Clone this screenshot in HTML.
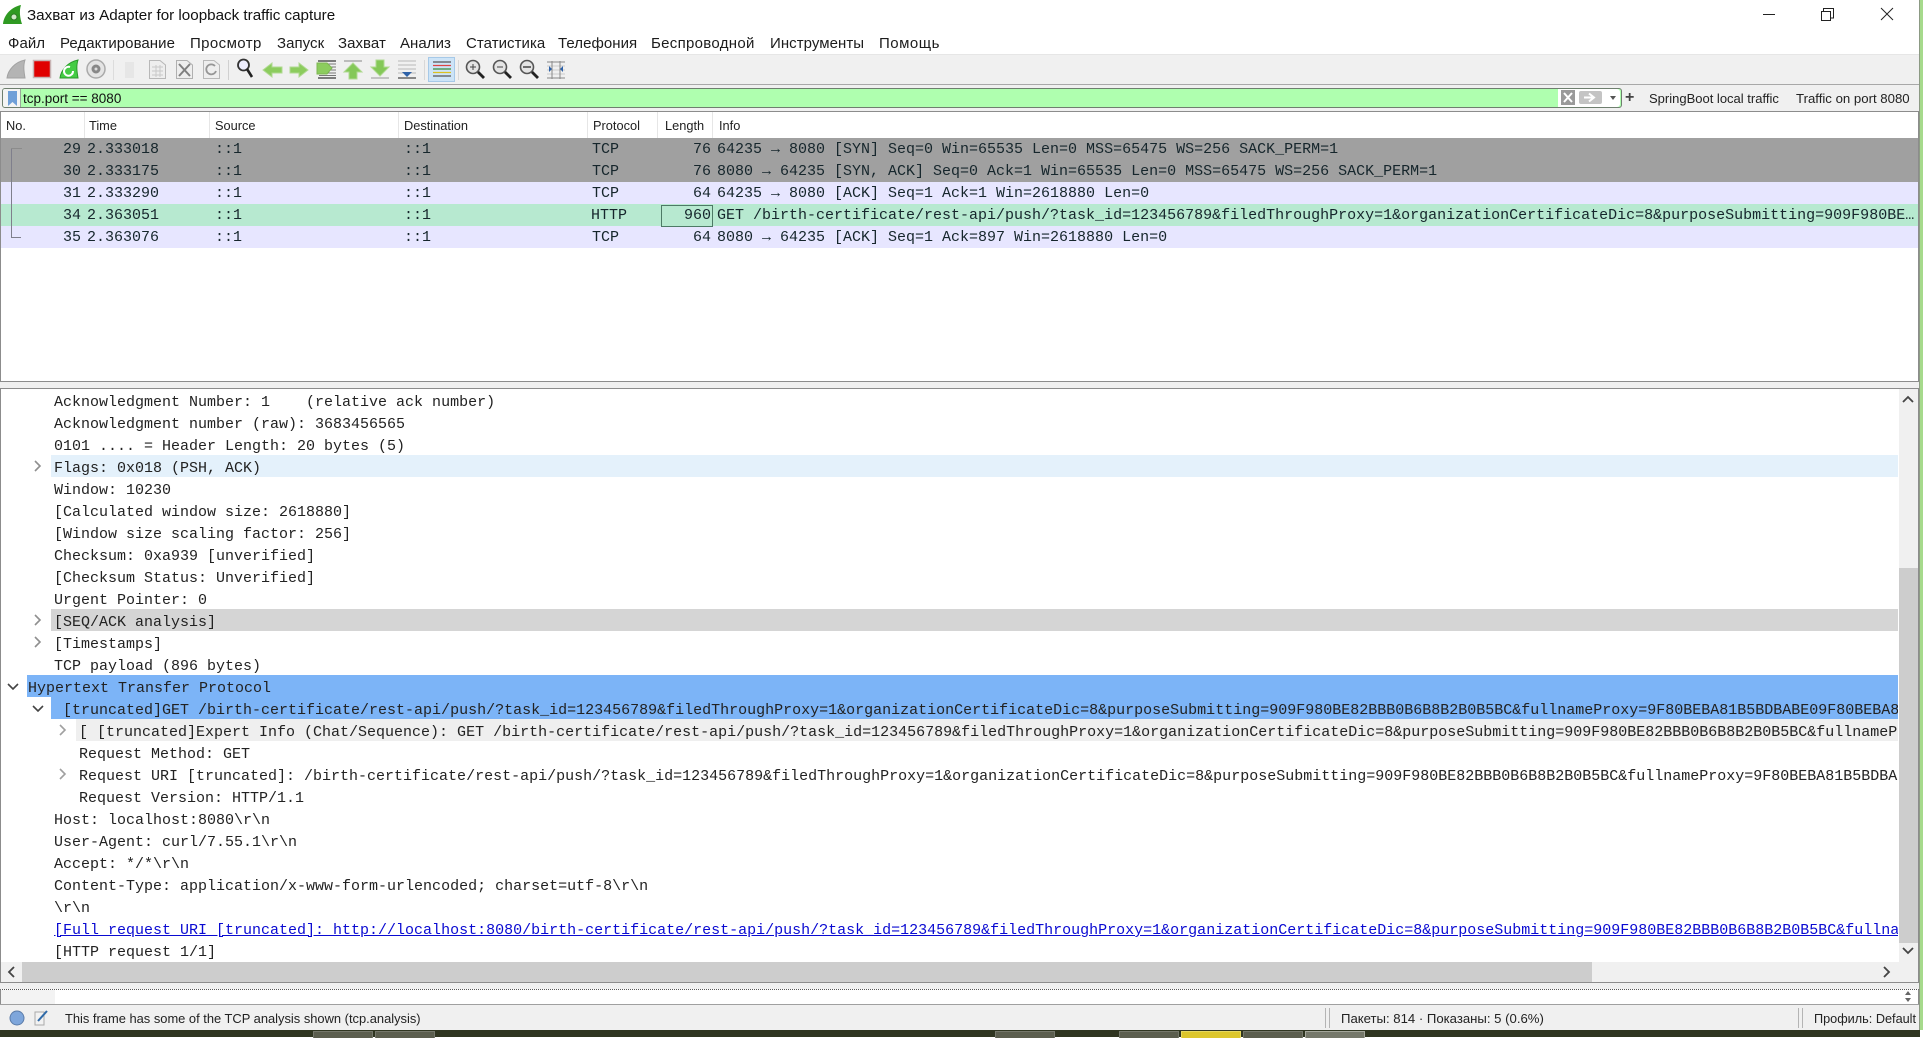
<!DOCTYPE html>
<html><head><meta charset="utf-8"><title>Wireshark</title>
<style>
html,body{margin:0;padding:0;background:#fff;}
body{width:1923px;height:1037px;overflow:hidden;position:relative;font-family:"Liberation Sans","Noto Sans CJK SC",sans-serif;color:#1a1a1a;}
.b{position:absolute;}
.t{position:absolute;white-space:pre;}
.menu{font-size:15px;letter-spacing:.05px;line-height:20px;top:33.5px;color:#1c1c1c;}
.th{font-size:12.8px;line-height:20px;top:116px;color:#222;}
.m{font-family:"Liberation Mono",monospace;font-size:15px;letter-spacing:0;line-height:22px;color:#16262c;margin-top:1px;}
.d{position:absolute;white-space:pre;font-family:"Liberation Mono",monospace;font-size:15px;letter-spacing:0;line-height:22px;color:#222;margin-top:3px;}
#det{position:absolute;left:0;top:389px;width:1898px;height:573px;overflow:hidden;}
.hl{position:absolute;height:22px;right:0;}
</style></head>
<body>
<!-- top menu and toolbar backgrounds -->
<div class="b" style="left:0;top:54px;width:1919px;height:1px;background:#e6e6e6"></div>
<div class="b" style="left:0;top:55px;width:1919px;height:29px;background:#f0f0f0"></div>
<div class="b" style="left:0;top:84px;width:1919px;height:1px;background:#a8a8a8"></div>
<div class="b" style="left:0;top:85px;width:1919px;height:26px;background:#f0f0f0"></div>

<div class="t" style="left:27px;top:6px;font-size:15.2px;line-height:20px;color:#111">Захват из Adapter for loopback traffic capture</div>
<div class="t menu" style="left:8px">Файл</div>
<div class="t menu" style="left:60px">Редактирование</div>
<div class="t menu" style="left:190px;letter-spacing:.4px">Просмотр</div>
<div class="t menu" style="left:277px">Запуск</div>
<div class="t menu" style="left:338px">Захват</div>
<div class="t menu" style="left:400px">Анализ</div>
<div class="t menu" style="left:466px">Статистика</div>
<div class="t menu" style="left:558px">Телефония</div>
<div class="t menu" style="left:651px;letter-spacing:.3px">Беспроводной</div>
<div class="t menu" style="left:770px">Инструменты</div>
<div class="t menu" style="left:879px;letter-spacing:.5px">Помощь</div>

<!-- filter bar -->
<div class="b" style="left:2px;top:88px;width:1618px;height:18px;border:1px solid #6f7f6f;border-radius:3px;background:#afffaf"></div>
<div class="b" style="left:3px;top:89px;width:17px;height:18px;background:#f4f4f4;border-right:1px solid #9aa89a;border-radius:2px 0 0 2px"></div>
<div class="b" style="left:1558px;top:89px;width:62px;height:18px;background:#fff;border-radius:0 3px 3px 0"></div>
<div class="t" style="left:23px;top:89px;font-size:13.5px;line-height:20px;color:#111">tcp.port == 8080</div>
<div class="t" style="left:1625px;top:88px;font-size:16px;line-height:20px;font-weight:bold;color:#444">+</div>
<div class="t" style="left:1649px;top:89px;font-size:13px;line-height:20px;color:#222">SpringBoot local traffic</div>
<div class="t" style="left:1796px;top:89px;font-size:13.2px;line-height:20px;color:#222">Traffic on port 8080</div>

<!-- packet list -->
<div class="b" style="left:0;top:111px;width:1917px;height:269px;border:1px solid #8c8c8c;background:#fff"></div>
<div class="b" style="left:84px;top:112px;width:1px;height:26px;background:#e6e6e6"></div>
<div class="b" style="left:209px;top:112px;width:1px;height:26px;background:#e6e6e6"></div>
<div class="b" style="left:398px;top:112px;width:1px;height:26px;background:#e6e6e6"></div>
<div class="b" style="left:587px;top:112px;width:1px;height:26px;background:#e6e6e6"></div>
<div class="b" style="left:657px;top:112px;width:1px;height:26px;background:#e6e6e6"></div>
<div class="b" style="left:712px;top:112px;width:1px;height:26px;background:#e6e6e6"></div>
<div class="t th" style="left:6px">No.</div>
<div class="t th" style="left:89px">Time</div>
<div class="t th" style="left:215px">Source</div>
<div class="t th" style="left:404px">Destination</div>
<div class="t th" style="left:593px">Protocol</div>
<div class="t th" style="left:665px">Length</div>
<div class="t th" style="left:719px">Info</div>

<div class="b" style="left:1px;top:138px;width:1917px;height:44px;background:#a0a0a0"></div>
<div class="b" style="left:1px;top:182px;width:1917px;height:22px;background:#e7e6ff"></div>
<div class="b" style="left:1px;top:204px;width:1917px;height:22px;background:#b7e9d0"></div>
<div class="b" style="left:1px;top:226px;width:1917px;height:22px;background:#e7e6ff"></div>
<div class="b" style="left:11px;top:148px;width:1px;height:89px;background:#7f7f8c"></div>
<div class="b" style="left:11px;top:148px;width:11px;height:1px;background:#8c8c8c"></div>
<div class="b" style="left:11px;top:237px;width:10px;height:1px;background:#7f7f8c"></div>
<div class="b" style="left:661px;top:205px;width:50px;height:20px;border:1px solid #4d7a66"></div>

<div class="t m" style="left:63px;top:138px">29</div><div class="t m" style="left:87px;top:138px">2.333018</div><div class="t m" style="left:215px;top:138px">::1</div><div class="t m" style="left:404px;top:138px">::1</div><div class="t m" style="left:592px;top:138px">TCP</div><div class="t m" style="left:693px;top:138px">76</div><div class="t m" style="left:717px;top:138px">64235 → 8080 [SYN] Seq=0 Win=65535 Len=0 MSS=65475 WS=256 SACK_PERM=1</div>
<div class="t m" style="left:63px;top:160px">30</div><div class="t m" style="left:87px;top:160px">2.333175</div><div class="t m" style="left:215px;top:160px">::1</div><div class="t m" style="left:404px;top:160px">::1</div><div class="t m" style="left:592px;top:160px">TCP</div><div class="t m" style="left:693px;top:160px">76</div><div class="t m" style="left:717px;top:160px">8080 → 64235 [SYN, ACK] Seq=0 Ack=1 Win=65535 Len=0 MSS=65475 WS=256 SACK_PERM=1</div>
<div class="t m" style="left:63px;top:182px">31</div><div class="t m" style="left:87px;top:182px">2.333290</div><div class="t m" style="left:215px;top:182px">::1</div><div class="t m" style="left:404px;top:182px">::1</div><div class="t m" style="left:592px;top:182px">TCP</div><div class="t m" style="left:693px;top:182px">64</div><div class="t m" style="left:717px;top:182px">64235 → 8080 [ACK] Seq=1 Ack=1 Win=2618880 Len=0</div>
<div class="t m" style="left:63px;top:204px">34</div><div class="t m" style="left:87px;top:204px">2.363051</div><div class="t m" style="left:215px;top:204px">::1</div><div class="t m" style="left:404px;top:204px">::1</div><div class="t m" style="left:591px;top:204px">HTTP</div><div class="t m" style="left:684px;top:204px">960</div><div class="t m" style="left:717px;top:204px">GET /birth-certificate/rest-api/push/?task_id=123456789&amp;filedThroughProxy=1&amp;organizationCertificateDic=8&amp;purposeSubmitting=909F980BE…</div>
<div class="t m" style="left:63px;top:226px">35</div><div class="t m" style="left:87px;top:226px">2.363076</div><div class="t m" style="left:215px;top:226px">::1</div><div class="t m" style="left:404px;top:226px">::1</div><div class="t m" style="left:592px;top:226px">TCP</div><div class="t m" style="left:693px;top:226px">64</div><div class="t m" style="left:717px;top:226px">8080 → 64235 [ACK] Seq=1 Ack=897 Win=2618880 Len=0</div>

<!-- splitter -->
<div class="b" style="left:0;top:382px;width:1919px;height:6px;background:#f0f0f0"></div>
<!-- details pane -->
<div class="b" style="left:0;top:388px;width:1917px;height:593px;border:1px solid #8c8c8c;background:#fff"></div>
<div id="det">
<div class="hl" style="left:51px;top:66px;background:#e4f1fb"></div>
<div class="hl" style="left:51px;top:220px;background:#d5d5d5"></div>
<div class="hl" style="left:27px;top:286px;background:#7cb4f7"></div>
<div class="hl" style="left:51px;top:308px;background:#7cb4f7"></div>
<div class="hl" style="left:76px;top:330px;background:#efefef"></div>
<div class="d" style="left:54px;top:0">Acknowledgment Number: 1    (relative ack number)</div>
<div class="d" style="left:54px;top:22px">Acknowledgment number (raw): 3683456565</div>
<div class="d" style="left:54px;top:44px">0101 .... = Header Length: 20 bytes (5)</div>
<div class="d" style="left:54px;top:66px">Flags: 0x018 (PSH, ACK)</div>
<div class="d" style="left:54px;top:88px">Window: 10230</div>
<div class="d" style="left:54px;top:110px">[Calculated window size: 2618880]</div>
<div class="d" style="left:54px;top:132px">[Window size scaling factor: 256]</div>
<div class="d" style="left:54px;top:154px">Checksum: 0xa939 [unverified]</div>
<div class="d" style="left:54px;top:176px">[Checksum Status: Unverified]</div>
<div class="d" style="left:54px;top:198px">Urgent Pointer: 0</div>
<div class="d" style="left:54px;top:220px">[SEQ/ACK analysis]</div>
<div class="d" style="left:54px;top:242px">[Timestamps]</div>
<div class="d" style="left:54px;top:264px">TCP payload (896 bytes)</div>
<div class="d" style="left:28px;top:286px">Hypertext Transfer Protocol</div>
<div class="d" style="left:63px;top:308px">[truncated]GET /birth-certificate/rest-api/push/?task_id=123456789&amp;filedThroughProxy=1&amp;organizationCertificateDic=8&amp;purposeSubmitting=909F980BE82BBB0B6B8B2B0B5BC&amp;fullnameProxy=9F80BEBA81B5BDBABE09F80BEBA81B5</div>
<div class="d" style="left:79px;top:330px">[ [truncated]Expert Info (Chat/Sequence): GET /birth-certificate/rest-api/push/?task_id=123456789&amp;filedThroughProxy=1&amp;organizationCertificateDic=8&amp;purposeSubmitting=909F980BE82BBB0B6B8B2B0B5BC&amp;fullnameProxy=9F80</div>
<div class="d" style="left:79px;top:352px">Request Method: GET</div>
<div class="d" style="left:79px;top:374px">Request URI [truncated]: /birth-certificate/rest-api/push/?task_id=123456789&amp;filedThroughProxy=1&amp;organizationCertificateDic=8&amp;purposeSubmitting=909F980BE82BBB0B6B8B2B0B5BC&amp;fullnameProxy=9F80BEBA81B5BDBABE09</div>
<div class="d" style="left:79px;top:396px">Request Version: HTTP/1.1</div>
<div class="d" style="left:54px;top:418px">Host: localhost:8080\r\n</div>
<div class="d" style="left:54px;top:440px">User-Agent: curl/7.55.1\r\n</div>
<div class="d" style="left:54px;top:462px">Accept: */*\r\n</div>
<div class="d" style="left:54px;top:484px">Content-Type: application/x-www-form-urlencoded; charset=utf-8\r\n</div>
<div class="d" style="left:54px;top:506px">\r\n</div>
<div class="d" style="left:54px;top:528px;color:#0a0ad2;text-decoration:underline">[Full request URI [truncated]: http://localhost:8080/birth-certificate/rest-api/push/?task_id=123456789&amp;filedThroughProxy=1&amp;organizationCertificateDic=8&amp;purposeSubmitting=909F980BE82BBB0B6B8B2B0B5BC&amp;fullnameProxy=9F80</div>
<div class="d" style="left:54px;top:550px">[HTTP request 1/1]</div>
</div>

<!-- scrollbars -->
<div class="b" style="left:1899px;top:389px;width:19px;height:573px;background:#f0f0f0"></div>
<div class="b" style="left:1899px;top:568px;width:19px;height:375px;background:#cdcdcd"></div>
<div class="b" style="left:1px;top:962px;width:1917px;height:20px;background:#f0f0f0"></div>
<div class="b" style="left:22px;top:962px;width:1570px;height:20px;background:#cdcdcd"></div>

<!-- hex pane -->
<div class="b" style="left:0;top:983px;width:1919px;height:6px;background:#f0f0f0"></div>
<div class="b" style="left:0;top:989px;width:1917px;height:14px;background:#fff;border:1px solid #8c8c8c;border-top:1px dotted #555;"></div>
<div class="b" style="left:1px;top:990px;width:54px;height:14px;background:#f3f3f3"></div>

<!-- status bar -->
<div class="b" style="left:0;top:1004px;width:1919px;height:1px;background:#a0a0a0"></div>
<div class="b" style="left:0;top:1005px;width:1919px;height:25px;background:#f0f0f0"></div>
<div class="t" style="left:65px;top:1010px;font-size:12.9px;line-height:18px;color:#222">This frame has some of the TCP analysis shown (tcp.analysis)</div>
<div class="t" style="left:1341px;top:1010px;font-size:13.15px;line-height:18px;color:#222">Пакеты: 814 · Показаны: 5 (0.6%)</div>
<div class="t" style="left:1814px;top:1010px;font-size:12.7px;line-height:18px;color:#222">Профиль: Default</div>
<div class="b" style="left:1325px;top:1008px;width:3px;height:20px;border-left:1px solid #b4b4b4;border-right:1px solid #b4b4b4"></div>
<div class="b" style="left:1798px;top:1008px;width:3px;height:20px;border-left:1px solid #b4b4b4;border-right:1px solid #b4b4b4"></div>

<!-- taskbar -->
<div class="b" style="left:0;top:1030px;width:1920px;height:7px;background:#2f3520"></div>
<div class="b" style="left:313px;top:1031px;width:58px;height:6px;background:#5b5e4e;border:1px solid #74776a;border-bottom:0"></div>
<div class="b" style="left:375px;top:1031px;width:58px;height:6px;background:#5b5e4e;border:1px solid #74776a;border-bottom:0"></div>
<div class="b" style="left:995px;top:1031px;width:58px;height:6px;background:#5b5e4e;border:1px solid #74776a;border-bottom:0"></div>
<div class="b" style="left:1119px;top:1031px;width:58px;height:6px;background:#5b5e4e;border:1px solid #74776a;border-bottom:0"></div>
<div class="b" style="left:1181px;top:1031px;width:58px;height:6px;background:#dcc62c;border:1px solid #e6d85e;border-bottom:0"></div>
<div class="b" style="left:1243px;top:1031px;width:58px;height:6px;background:#5b5e4e;border:1px solid #74776a;border-bottom:0"></div>
<div class="b" style="left:1305px;top:1031px;width:58px;height:6px;background:#75786a;border:1px solid #a3a69a;border-bottom:0"></div>

<!-- right desktop edge -->
<div class="b" style="left:1920px;top:0;width:3px;height:1030px;background:#a6da8c"></div>
<div class="b" style="left:1919px;top:0;width:1px;height:1030px;background:#8c9a84"></div>

<!-- icons -->
<svg class="b" style="left:0;top:0" width="1923" height="1037" viewBox="0 0 1923 1037" fill="none">
<!-- app logo -->
<path d="M3 24C4 14 12 7 21 5C19 11 20 18 22 24Z" fill="#2f9a22"/>
<circle cx="14" cy="17" r="3" fill="#cfe8c8" stroke="#2d7a25"/>
<!-- window controls -->
<path d="M1763 14.500H1775" stroke="#222" stroke-width="1"/>
<path d="M1821.500 11.500H1830.500V20.500H1821.500ZM1823.500 11V8.500H1833.500V18H1831" stroke="#222" stroke-width="1"/>
<path d="M1881 8L1893 20M1893 8L1881 20" stroke="#222" stroke-width="1"/>
<!-- toolbar -->
<path d="M7 78C8 70 15 62 25 60C23 66 24 72 25 78Z" fill="#b4b4b4" stroke="#a2a2a2"/>
<rect x="33.500" y="60.500" width="17" height="17" fill="#e00000" stroke="#c8b4b4" stroke-width="1.500"/>
<path d="M60 78C61 70 68 62 78 60C76 66 77 72 78 78Z" fill="#44cc44" stroke="#2a9a2a"/>
<path d="M70 67a4.500 4.500 0 1 0 3 4" stroke="#fff" stroke-width="2"/>
<circle cx="96" cy="69" r="9" fill="#e4e4e4" stroke="#aaa" stroke-width="1.500"/>
<circle cx="96" cy="69" r="4" fill="#888" stroke="#888"/>
<circle cx="96" cy="69" r="1.500" fill="#ddd"/>
<path d="M113.500 60V80" stroke="#dcdcdc"/>
<rect x="125" y="62" width="9" height="16" fill="#e6e6e6"/>
<path d="M149.500 60.500H160L165.500 65V78.500H149.500Z" fill="#eee" stroke="#b8b8b8"/>
<path d="M152 67H163M152 71H163M152 75H163M156 65V77M160 65V77" stroke="#c8c8c8"/>
<path d="M176.500 60.500H187L192.500 65V78.500H176.500Z" fill="#eee" stroke="#b0b0b0"/>
<path d="M179 64L190 76M190 64L179 76" stroke="#808080" stroke-width="2"/>
<path d="M203.500 60.500H214L219.500 65V78.500H203.500Z" fill="#eee" stroke="#b8b8b8"/>
<path d="M215 66a5 5 0 1 0 1 5" stroke="#969696" stroke-width="1.800"/>
<path d="M228.500 60V80" stroke="#d0d0d0"/>
<circle cx="243.500" cy="65" r="5.500" fill="#eef" stroke="#333" stroke-width="1.800"/>
<path d="M247 69L252 77" stroke="#222" stroke-width="2.600"/>
<path d="M263 70L272 63V67H282V73H272V77Z" fill="#8ccc5e" stroke="#b0da92"/>
<path d="M308 70L299 63V67H290V73H299V77Z" fill="#8ccc5e" stroke="#b0da92"/>
<path d="M318 61H336M318 78H336" stroke="#555" stroke-width="1.500"/>
<path d="M328 64H336M328 67H336M328 70H336M328 73H336" stroke="#777"/>
<path d="M319 75.500H336" stroke="#777"/>
<path d="M317 63H327L332 68L327 74H317Z" fill="#8ccc5e" stroke="#7eb652"/>
<path d="M344 61H362" stroke="#aaa" stroke-width="1.500"/>
<path d="M353 63L362 72H357V79H349V72H344Z" fill="#84c858" stroke="#b0da92"/>
<path d="M371 78H389" stroke="#b4b4b4" stroke-width="1.500"/>
<path d="M380 76L371 67H376V60H384V67H389Z" fill="#84c858" stroke="#b0da92"/>
<path d="M398 61H416M398 65H416M398 69H416M398 73H416" stroke="#b8b8b8"/>
<path d="M398 78H416" stroke="#666" stroke-width="1.500"/>
<path d="M402 72H412L407 77Z" fill="#2f62a8"/>
<path d="M424.500 60V80" stroke="#d8d8d8"/>
<rect x="428.500" y="57.500" width="26" height="24" fill="#cde4f7" stroke="#a6c9e8"/>
<path d="M433 62H451" stroke="#555" stroke-width="1.300"/>
<path d="M433 65.500H451" stroke="#d44" stroke-width="1.300"/>
<path d="M433 69H451" stroke="#3a8a3a" stroke-width="1.300"/>
<path d="M433 72.500H451" stroke="#dcc020" stroke-width="1.300"/>
<path d="M433 76H451" stroke="#555" stroke-width="1.300"/>
<path d="M458.500 60V80" stroke="#d8d8d8"/>
<circle cx="473" cy="67" r="6.500" fill="#e4e4e4" stroke="#555" stroke-width="1.600"/>
<path d="M478 72L484 78" stroke="#222" stroke-width="2.800"/>
<path d="M470 67H476M473 64V70" stroke="#444"/>
<circle cx="500" cy="67" r="6.500" fill="#e4e4e4" stroke="#555" stroke-width="1.600"/>
<path d="M505 72L511 78" stroke="#222" stroke-width="2.800"/>
<path d="M497 67H503" stroke="#444"/>
<circle cx="527" cy="67" r="6.500" fill="#e4e4e4" stroke="#555" stroke-width="1.600"/>
<path d="M532 72L538 78" stroke="#222" stroke-width="2.800"/>
<path d="M523 67H531" stroke="#444" stroke-width="1.500"/>
<path d="M547 62H565M547 78H565" stroke="#888"/>
<path d="M547 66H565M547 70H565M547 74H565" stroke="#ccc"/>
<path d="M552 61V79M560 61V79" stroke="#888"/>
<path d="M549 66L552 69L549 72ZM563 66L560 69L563 72Z" fill="#2f62a8"/>
<!-- filter bookmark -->
<path d="M8 91H17V106L12.500 102L8 106Z" fill="#6f9fd8"/>
<!-- filter buttons -->
<rect x="1561" y="90" width="14" height="15" fill="#9a9a9a"/>
<path d="M1564 93L1572 102M1572 93L1564 102" stroke="#fff" stroke-width="2"/>
<rect x="1579" y="91" width="23" height="13" rx="2" fill="#c4c4c4"/>
<path d="M1584 97.500H1593M1589 93.500L1594 97.500L1589 101.500" stroke="#fff" stroke-width="2"/>
<path d="M1610 96H1616L1613 100Z" fill="#555"/>
<!-- chevrons -->
<path d="M35 461L40 466L35 471M35 615L40 620L35 625M35 637L40 642L35 647" stroke="#8f8f8f" stroke-width="1.600"/>
<path d="M60 725L65 730L60 735M60 769L65 774L60 779" stroke="#a0a0a0" stroke-width="1.600"/>
<path d="M8 684L13 689L18 684M33 706L38 711L43 706" stroke="#444" stroke-width="1.600"/>
<!-- scrollbar arrows -->
<path d="M1903 402L1908 397L1913 402" stroke="#444" stroke-width="1.800"/>
<path d="M1903 948L1908 953L1913 948" stroke="#444" stroke-width="1.800"/>
<path d="M14 967L9 972L14 977" stroke="#444" stroke-width="1.800"/>
<path d="M1884 967L1889 972L1884 977" stroke="#444" stroke-width="1.800"/>
<path d="M1905 995L1908 991L1911 995ZM1905 998L1908 1002L1911 998Z" fill="#666"/>
<!-- status icons -->
<circle cx="17" cy="1018" r="7" fill="#7ea6db" stroke="#5a7ba8"/>
<path d="M35 1012H44V1025H35Z" fill="#f2f2f2" stroke="#aaa"/>
<path d="M38 1021L47 1011" stroke="#2f6aa8" stroke-width="2"/>
</svg>
</body></html>
